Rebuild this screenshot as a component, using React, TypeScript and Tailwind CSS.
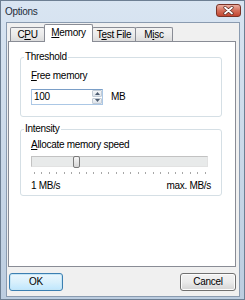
import React from "react";

const tabs = [
  { pre: "C", key: "P", post: "U", w: "w-[35px]" },
  { pre: "", key: "M", post: "emory", w: "w-[49px]", active: true },
  { pre: "T", key: "e", post: "st File", w: "w-[44px]" },
  { pre: "M", key: "i", post: "sc", w: "w-[38px]" },
];

function Tab({ t, first }: { t: (typeof tabs)[number]; first: boolean }) {
  const base = "flex items-start justify-center rounded-t-[2px] border-x border-t border-[#898c95]";
  if (t.active) {
    return (
      <div className={`${base} ${t.w} -ml-px -mb-px relative z-10 h-[18px] bg-white pt-[2px]`}>
        <span>
          {t.pre}
          <span className="underline underline-offset-1">{t.key}</span>
          {t.post}
        </span>
      </div>
    );
  }
  return (
    <div
      className={`${base} ${t.w} ${first ? "" : "-ml-px"} h-[14px] bg-gradient-to-b from-[#f3f3f3] via-[#ebebeb] to-[#dcdcdc] pt-[1px] leading-[12px]`}
    >
      <span>
        {t.pre}
        <span className="underline underline-offset-1">{t.key}</span>
        {t.post}
      </span>
    </div>
  );
}

export default function App() {
  return (
    <div className="w-[245px] h-[300px] flex flex-col border border-[#6d7f93] bg-gradient-to-b from-[#d9e5f2] to-[#bccde0] font-['Liberation_Sans',Arial,sans-serif] text-[10px] leading-[12px] tracking-[-0.3px] text-black">
      {/* Title bar */}
      <div className="h-[21px] flex items-start justify-between pl-[4px] pr-[3px] shrink-0">
        <span className="pt-[5px] text-[#1e2b3a]">Options</span>
        <div className="mt-[3px] w-[25px] h-[13px] rounded-[3px] border border-[#7a3327] bg-gradient-to-b from-[#eab0a2] via-[#d4705c] to-[#c2452f] flex items-center justify-center">
          <svg width="11" height="9" viewBox="0 0 11 9">
            <path d="M2 1.5 L9 7.5 M9 1.5 L2 7.5" stroke="#5a2a22" strokeWidth="3.2" strokeLinecap="round" />
            <path d="M2 1.5 L9 7.5 M9 1.5 L2 7.5" stroke="#ffffff" strokeWidth="1.8" strokeLinecap="round" />
          </svg>
        </div>
      </div>

      {/* Client area */}
      <div className="flex-1 ml-[5px] mr-[4px] mb-[2px] bg-[#f0f0f0] border border-[#8a9bb0] flex flex-col">
        {/* Tabs */}
        <div className="relative z-10 flex items-end pt-[1px] pl-[3px]">
          {tabs.map((t, i) => (
            <Tab key={i} t={t} first={i === 0} />
          ))}
        </div>

        {/* Tab panel */}
        <div className="ml-[1px] mr-[3px] h-[226px] border border-[#898c95] bg-white flex flex-col">
          {/* Threshold */}
          <fieldset className="mt-[9px] ml-[11px] w-[202px] rounded-[3px] border border-[#d5dfe5] px-[3px] pb-[11px]">
            <legend className="px-[1px] leading-[12px]">Threshold</legend>
            <div className="pl-[7px] pt-[7px] flex flex-col">
              <span>
                <span className="underline underline-offset-1">F</span>ree memory
              </span>
              <div className="mt-[7px] flex items-center">
                <div className="w-[72px] h-[16px] flex border border-[#abc7e5] border-t-[#7a9ec7]">
                  <span className="flex-1 pl-[2px] pt-[1px]">100</span>
                  <div className="w-[10px] flex flex-col gap-[1px] p-[0px]">
                    <div className="flex-1 flex items-center justify-center border border-[#c3ccd6] rounded-[1px] bg-gradient-to-b from-[#f4f6f8] to-[#dde3ea]">
                      <svg width="5" height="3" viewBox="0 0 5 3">
                        <path d="M0 3 L2.5 0 L5 3 Z" fill="#4d5c70" />
                      </svg>
                    </div>
                    <div className="flex-1 flex items-center justify-center border border-[#c3ccd6] rounded-[1px] bg-gradient-to-b from-[#f4f6f8] to-[#dde3ea]">
                      <svg width="5" height="3" viewBox="0 0 5 3">
                        <path d="M0 0 L5 0 L2.5 3 Z" fill="#4d5c70" />
                      </svg>
                    </div>
                  </div>
                </div>
                <span className="ml-[8px]">MB</span>
              </div>
            </div>
          </fieldset>

          {/* Intensity */}
          <fieldset className="mt-[6px] ml-[11px] w-[202px] rounded-[3px] border border-[#d5dfe5] px-[3px] pb-[3px]">
            <legend className="px-[1px] leading-[12px]">Intensity</legend>
            <div className="pl-[7px] pt-[4px] flex flex-col">
              <span>
                <span className="underline underline-offset-1">A</span>llocate memory speed
              </span>
              <div className="relative mt-[5px] w-[177px] h-[11px] border border-[#c2c2c2] border-b-[#e2e2e2] border-r-[#e2e2e2] bg-[#e8eaea]">
                <div className="absolute left-[41px] -top-[1px] w-[7px] h-[12px] rounded-[2px] border border-[#7a7a7a] bg-gradient-to-b from-[#f6f6f6] to-[#d6d6d6]" />
              </div>
              <div className="mt-[5px] ml-[3px] w-[172px] h-[2px] flex justify-between">
                {Array.from({ length: 24 }).map((_, i) => (
                  <div key={i} className="w-px h-[2px] bg-[#a7a7a7]" />
                ))}
              </div>
              <div className="mt-[6px] w-[180px] flex justify-between">
                <span>1 MB/s</span>
                <span>max. MB/s</span>
              </div>
            </div>
          </fieldset>
        </div>

        {/* Buttons */}
        <div className="mt-[6px] flex justify-between pl-[2px] pr-[3px]">
          <button className="w-[54px] h-[18px] rounded-[3px] border border-[#3c7fb1] bg-gradient-to-b from-[#eaf6fd] via-[#d9f0fc] to-[#bee6fd] shadow-[inset_0_0_0_1px_#c4e5f6] leading-[12px]">
            OK
          </button>
          <button className="w-[56px] h-[18px] rounded-[3px] border border-[#707070] bg-gradient-to-b from-[#f2f2f2] via-[#ebebeb] to-[#d4d4d4] shadow-[inset_0_0_0_1px_#fcfcfc] leading-[12px]">
            Cancel
          </button>
        </div>
      </div>
    </div>
  );
}
